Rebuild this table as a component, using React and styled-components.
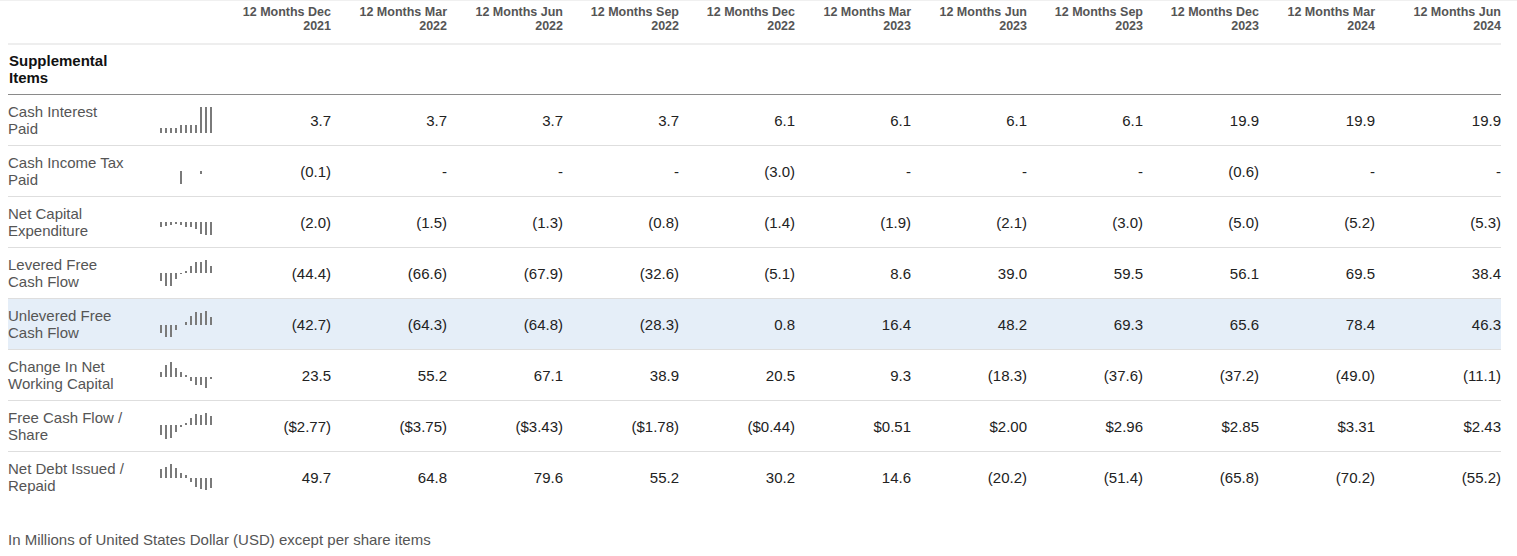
import styled, { createGlobalStyle } from 'styled-components';

const periods = [
  ['Dec', '2021'], ['Mar', '2022'], ['Jun', '2022'], ['Sep', '2022'],
  ['Dec', '2022'], ['Mar', '2023'], ['Jun', '2023'], ['Sep', '2023'],
  ['Dec', '2023'], ['Mar', '2024'], ['Jun', '2024'],
];

const rows = [
  { label: 'Cash Interest Paid', values: [3.7, 3.7, 3.7, 3.7, 6.1, 6.1, 6.1, 6.1, 19.9, 19.9, 19.9] },
  { label: 'Cash Income Tax Paid', values: [-0.1, 0, 0, 0, -3.0, 0, 0, 0, -0.6, 0, 0] },
  { label: 'Net Capital Expenditure', values: [-2.0, -1.5, -1.3, -0.8, -1.4, -1.9, -2.1, -3.0, -5.0, -5.2, -5.3] },
  { label: 'Levered Free Cash Flow', values: [-44.4, -66.6, -67.9, -32.6, -5.1, 8.6, 39.0, 59.5, 56.1, 69.5, 38.4] },
  { label: 'Unlevered Free Cash Flow', values: [-42.7, -64.3, -64.8, -28.3, 0.8, 16.4, 48.2, 69.3, 65.6, 78.4, 46.3], active: true },
  { label: 'Change In Net Working Capital', values: [23.5, 55.2, 67.1, 38.9, 20.5, 9.3, -18.3, -37.6, -37.2, -49.0, -11.1] },
  { label: 'Free Cash Flow / Share', values: [-2.77, -3.75, -3.43, -1.78, -0.44, 0.51, 2.0, 2.96, 2.85, 3.31, 2.43], money: true },
  { label: 'Net Debt Issued / Repaid', values: [49.7, 64.8, 79.6, 55.2, 30.2, 14.6, -20.2, -51.4, -65.8, -70.2, -55.2] },
];

const format = (v, money) => {
  if (v === 0) return '-';
  const digits = money ? 2 : 1;
  const body = (money ? '$' : '') + Math.abs(v).toFixed(digits);
  return v < 0 ? `(${body})` : body;
};

const GlobalStyle = createGlobalStyle`
  body {
    margin: 0;
    background: #fff;
    font-family: "Liberation Sans", Arial, sans-serif;
  }
`;

const Page = styled.div`
  border-top: 1px solid #f0f0f0;
  padding: 0 8px;
`;

const Table = styled.div`
  width: 1493px;
`;

const Row = styled.div`
  display: grid;
  grid-template-columns: 120px 97px repeat(11, 116px);
  align-items: center;
  background: ${p => (p.$active ? '#e5eef8' : 'transparent')};
  border-bottom: ${p => p.$border || 'none'};
`;

const HeadCell = styled.div`
  align-self: end;
  padding: 4px ${p => (p.$last ? '0' : '10px')} 10px 0;
  text-align: right;
  font-size: 12.5px;
  line-height: 14px;
  font-weight: bold;
  color: #555;
`;

const SectionTitle = styled.div`
  grid-column: 1 / 2;
  padding: 7px 0 8px 1px;
  font-size: 15px;
  line-height: 17px;
  font-weight: bold;
  color: #111;
`;

const Label = styled.div`
  padding: 8px 0;
  font-size: 15px;
  line-height: 17px;
  color: #555;
`;

const SparkCell = styled.div`
  display: flex;
  align-items: center;
  padding-left: 32px;
`;

const Value = styled.div`
  padding-right: ${p => (p.$last ? '0' : '10px')};
  text-align: right;
  font-size: 15px;
  line-height: 17px;
  color: #222;
`;

const Note = styled.p`
  margin: 29px 0 0;
  font-size: 15px;
  line-height: 17px;
  color: #555;
`;

const Sparkline = ({ values }) => {
  const H = 26;
  const max = Math.max(0, ...values);
  const min = Math.min(0, ...values);
  let base, scale;
  if (max === 0) {
    base = H / 2;
    scale = H / 2 / -min;
  } else {
    scale = H / (max - min);
    base = max * scale;
  }
  return (
    <svg width="57" height={H} viewBox={`0 0 57 ${H}`} shapeRendering="crispEdges">
      {values.map((v, i) => {
        const h = Math.round(Math.abs(v) * scale);
        if (h === 0) return null;
        const y = v > 0 ? Math.round(base) - h : Math.round(base);
        return <rect key={i} x={i * 5} y={y} width="2" height={h} fill="#7a7a7a" />;
      })}
    </svg>
  );
};

const App = () => (
  <Page>
    <GlobalStyle />
    <Table>
      <Row $border="2px solid #eeeeee">
        <div />
        <div />
        {periods.map(([m, y], i) => (
          <HeadCell key={i} $last={i === periods.length - 1}>
            12 Months {m}
            <br />
            {y}
          </HeadCell>
        ))}
      </Row>
      <Row $border="1px solid #8a8a8a">
        <SectionTitle>Supplemental Items</SectionTitle>
      </Row>
      {rows.map((r, ri) => (
        <Row
          key={r.label}
          $active={r.active}
          $border={ri === rows.length - 1 ? 'none' : '1px solid #dedede'}
        >
          <Label>{r.label}</Label>
          <SparkCell>
            <Sparkline values={r.values} />
          </SparkCell>
          {r.values.map((v, i) => (
            <Value key={i} $last={i === r.values.length - 1}>
              {format(v, r.money)}
            </Value>
          ))}
        </Row>
      ))}
    </Table>
    <Note>In Millions of United States Dollar (USD) except per share items</Note>
  </Page>
);

export default App;
